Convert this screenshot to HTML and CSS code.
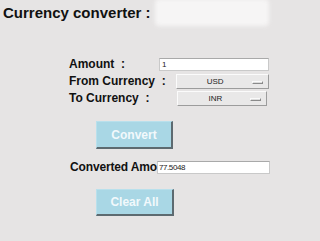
FILE: index.html
```html
<!DOCTYPE html>
<html>
<head>
<meta charset="utf-8">
<link rel="stylesheet" href="styles.css">
</head>
<body>
<div class="app">
  <header class="header">
    <h1 class="title">Currency converter :</h1>
    <div class="glare"></div>
  </header>
  <div class="form">
    <div class="row">
      <span class="label">Amount&nbsp; :</span>
      <div class="entry entry-amount">1</div>
    </div>
    <div class="row">
      <span class="label">From Currency&nbsp; :</span>
      <div class="menu menu-from"><span class="menu-text">USD</span><span class="indicator"></span></div>
    </div>
    <div class="row">
      <span class="label">To Currency&nbsp; :</span>
      <div class="menu menu-to"><span class="menu-text">INR</span><span class="indicator"></span></div>
    </div>
    <button class="btn btn-convert">Convert</button>
    <div class="row row-result">
      <span class="label label-result">Converted Amo</span>
      <div class="entry entry-result">77.5048</div>
    </div>
    <button class="btn btn-clear">Clear All</button>
  </div>
</div>
</body>
</html>
```

FILE: styles.css
```css
html, body {
  margin: 0;
  padding: 0;
}
body {
  background: #e6e4e4;
  width: 300px;
  height: 241px;
  overflow: hidden;
  font-family: "Liberation Sans", Arial, sans-serif;
  color: #111;
}
.app {
  display: flex;
  flex-direction: column;
}
.header {
  display: flex;
  align-items: flex-start;
  height: 30px;
}
.title {
  margin: 0;
  padding: 3px 0 0 3px;
  font-size: 15px;
  line-height: 20px;
  font-weight: bold;
  white-space: nowrap;
}
.glare {
  width: 114px;
  height: 27px;
  margin-left: 4px;
  margin-top: -1px;
  background: #f6f5f5;
  border-radius: 4px;
  filter: blur(2px);
}
.form {
  display: flex;
  flex-direction: column;
  padding-top: 26px;
}
.row {
  display: flex;
  align-items: center;
  height: 17px;
  padding-left: 69px;
}
.label {
  font-size: 12px;
  font-weight: bold;
  white-space: nowrap;
  line-height: 17px;
}
.label-result {
  padding-left: 1px;
  letter-spacing: -0.15px;
}
.entry {
  box-sizing: border-box;
  height: 13px;
  background: #fff;
  border: 1px solid #c9c9c9;
  border-top-color: #a9a9a9;
  font-size: 8px;
  line-height: 11px;
  padding-left: 2px;
  color: #222;
  white-space: nowrap;
}
.entry-amount {
  width: 110px;
  margin-left: 34px;
}
.entry-result {
  width: 113px;
  padding-left: 1px;
  letter-spacing: -0.4px;
}
.menu {
  box-sizing: border-box;
  height: 15px;
  display: flex;
  align-items: center;
  background: #e9e8e8;
  border: 1px solid #fbfbfb;
  border-right-color: #9c9c9c;
  border-bottom-color: #9c9c9c;
  font-size: 8px;
  color: #222;
}
.menu-from {
  width: 93px;
  margin-left: 10px;
}
.menu-to {
  width: 90px;
  margin-left: 28px;
}
.menu-text {
  flex: 1;
  text-align: center;
  padding-left: 2px;
}
.indicator {
  width: 9px;
  height: 1px;
  margin-right: 5px;
  margin-top: 2px;
  border: 1px solid #fafafa;
  border-right-color: #8a8a8a;
  border-bottom-color: #8a8a8a;
  background: #dcdcdc;
}
.btn {
  box-sizing: border-box;
  display: block;
  margin-left: 96px;
  padding: 0;
  background: #a9d7e5;
  border: 2px solid #b9e0ec;
  border-right-color: #5d6a70;
  border-bottom-color: #5d6a70;
  border-top-width: 1px;
  border-left-width: 1px;
  color: #f2f9fc;
  font-family: "Liberation Sans", Arial, sans-serif;
  font-size: 12px;
  font-weight: bold;
}
.btn-convert {
  width: 77px;
  height: 28px;
  margin-top: 14px;
}
.row-result {
  margin-top: 10px;
}
.btn-clear {
  width: 78px;
  height: 27px;
  margin-top: 13px;
}
```
